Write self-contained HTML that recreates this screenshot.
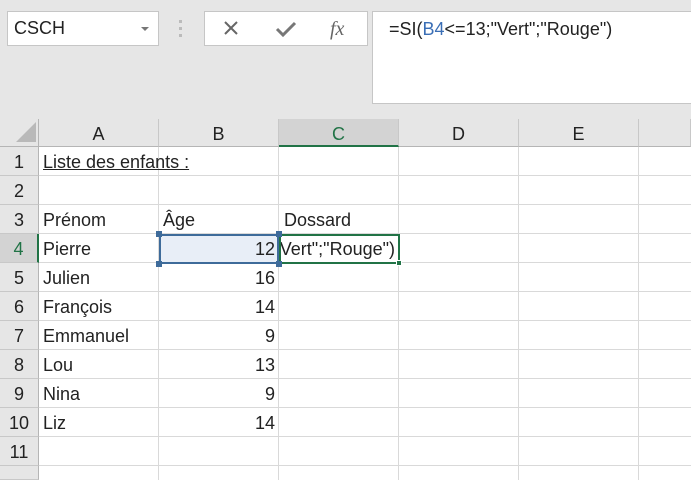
<!DOCTYPE html><html><head><style>
html,body{margin:0;width:691px;height:480px;overflow:hidden}
body{background:#e6e6e6;font-family:"Liberation Sans",sans-serif;position:relative}
div{position:absolute;box-sizing:border-box}
.t{font-size:18px;color:#222;white-space:nowrap;line-height:31px}
.ch{top:119px;height:28px;background:#e6e6e6;border-right:1px solid #c8c8c8;border-bottom:1px solid #b5b5b5;text-align:center;font-size:18px;line-height:31px;color:#222}
.rh{left:0;width:39px;height:29px;background:#e6e6e6;border-bottom:1px solid #c8c8c8;border-right:1px solid #b5b5b5;text-align:center;font-size:18px;line-height:31px;color:#222}
.h{height:1px;left:39px;right:0;background:#d9d9d9}
.v{width:1px;top:147px;bottom:0;background:#d9d9d9}
</style></head><body>
<div style="left:7px;top:11px;width:152px;height:35px;background:#fff;border:1px solid #c6c6c6"></div>
<div class="t" style="left:14px;top:13px">CSCH</div>
<div style="left:141px;top:27px;width:0;height:0;border-left:4px solid transparent;border-right:4px solid transparent;border-top:4px solid #777"></div>
<div style="left:179px;top:20px;width:3px;height:3px;background:#bbb;box-shadow:0 7px 0 #bbb,0 14px 0 #bbb"></div>
<div style="left:204px;top:11px;width:164px;height:35px;background:#fff;border:1px solid #c6c6c6"></div>
<svg style="position:absolute;left:204px;top:11px" width="164" height="35"><path d="M21 11 L33 23 M33 11 L21 23" stroke="#666" stroke-width="2" fill="none"/><path d="M73 18 L79 24 L91 12" stroke="#777" stroke-width="3" fill="none"/><text x="126" y="24" font-family="Liberation Serif" font-style="italic" font-size="20" fill="#666">fx</text></svg>
<div style="left:372px;top:11px;width:330px;height:93px;background:#fff;border:1px solid #c6c6c6"></div>
<div class="t" style="left:389px;top:14px">=SI(<span style="color:#3a6eb5">B4</span>&lt;=13;"Vert";"Rouge")</div>
<div style="left:0;top:119px;width:39px;height:28px;background:#e6e6e6;border-right:1px solid #b5b5b5;border-bottom:1px solid #b5b5b5"></div>
<div style="left:16px;top:122px;width:0;height:0;border-left:20px solid transparent;border-bottom:20px solid #b9b9b9"></div>
<div class="ch" style="left:39px;width:120px">A</div>
<div class="ch" style="left:159px;width:120px">B</div>
<div class="ch" style="left:279px;width:120px;background:#d3d3d3;border-bottom:2px solid #217346;color:#217346">C</div>
<div class="ch" style="left:399px;width:120px">D</div>
<div class="ch" style="left:519px;width:120px">E</div>
<div class="ch" style="left:639px;width:52px"></div>
<div style="left:39px;top:147px;width:652px;height:333px;background:#fff"></div>
<div class="v" style="left:158px"></div><div class="v" style="left:278px"></div><div class="v" style="left:398px"></div><div class="v" style="left:518px"></div><div class="v" style="left:638px"></div>
<div class="h" style="top:175px"></div><div class="h" style="top:204px"></div><div class="h" style="top:233px"></div><div class="h" style="top:262px"></div><div class="h" style="top:291px"></div><div class="h" style="top:320px"></div><div class="h" style="top:349px"></div><div class="h" style="top:378px"></div><div class="h" style="top:407px"></div><div class="h" style="top:436px"></div><div class="h" style="top:465px"></div>
<div class="rh" style="top:147px">1</div><div class="rh" style="top:176px">2</div><div class="rh" style="top:205px">3</div>
<div class="rh" style="top:234px;background:#d3d3d3;border-right:2px solid #217346;color:#217346">4</div>
<div class="rh" style="top:263px">5</div><div class="rh" style="top:292px">6</div><div class="rh" style="top:321px">7</div><div class="rh" style="top:350px">8</div><div class="rh" style="top:379px">9</div><div class="rh" style="top:408px">10</div><div class="rh" style="top:437px">11</div><div class="rh" style="top:466px;height:14px"></div>
<div style="left:159px;top:234px;width:120px;height:30px;background:#e8eef7;border:2px solid #3e6b9a"></div>
<div style="left:279px;top:234px;width:121px;height:30px;border:2px solid #217346;background:#fff"></div>
<div style="left:156px;top:231px;width:6px;height:6px;background:#3e6b9a"></div>
<div style="left:276px;top:231px;width:6px;height:6px;background:#3e6b9a"></div>
<div style="left:156px;top:261px;width:6px;height:6px;background:#3e6b9a"></div>
<div style="left:276px;top:261px;width:6px;height:6px;background:#3e6b9a"></div>
<div style="left:396px;top:260px;width:6px;height:6px;background:#217346;border:1px solid #fff"></div>
<div class="t" style="left:43px;top:147px;text-decoration:underline">Liste des enfants :</div>
<div class="t" style="left:43px;top:205px">Prénom</div>
<div class="t" style="left:163px;top:205px">Âge</div>
<div class="t" style="left:284px;top:205px">Dossard</div>
<div class="t" style="left:43px;top:234px">Pierre</div>
<div class="t" style="left:43px;top:263px">Julien</div>
<div class="t" style="left:43px;top:292px">François</div>
<div class="t" style="left:43px;top:321px">Emmanuel</div>
<div class="t" style="left:43px;top:350px">Lou</div>
<div class="t" style="left:43px;top:379px">Nina</div>
<div class="t" style="left:43px;top:408px">Liz</div>
<div class="t" style="left:159px;width:116px;text-align:right;top:234px">12</div>
<div class="t" style="left:159px;width:116px;text-align:right;top:263px">16</div>
<div class="t" style="left:159px;width:116px;text-align:right;top:292px">14</div>
<div class="t" style="left:159px;width:116px;text-align:right;top:321px">9</div>
<div class="t" style="left:159px;width:116px;text-align:right;top:350px">13</div>
<div class="t" style="left:159px;width:116px;text-align:right;top:379px">9</div>
<div class="t" style="left:159px;width:116px;text-align:right;top:408px">14</div>
<div style="left:281px;top:236px;width:116px;height:26px;overflow:hidden"><div class="t" style="right:2px;top:-2px">"Vert";"Rouge")</div></div>
</body></html>
